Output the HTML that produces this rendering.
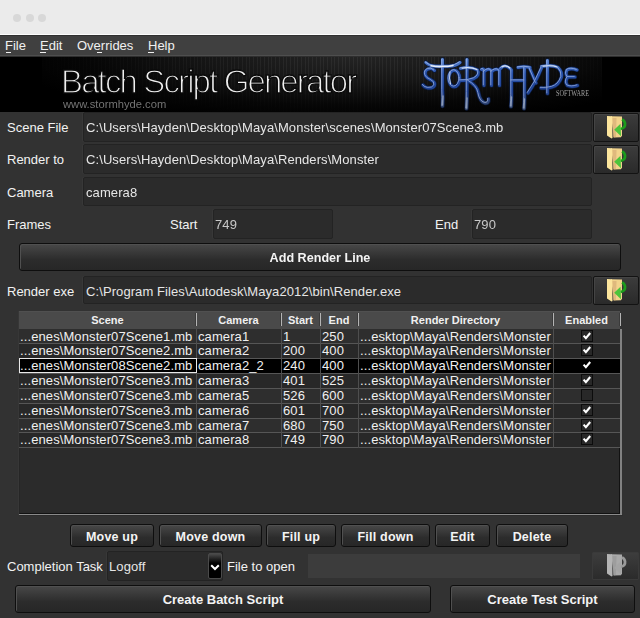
<!DOCTYPE html>
<html><head><meta charset="utf-8">
<style>
*{box-sizing:border-box;margin:0;padding:0}
html,body{width:640px;height:618px;overflow:hidden;background:#323232;font-family:"Liberation Sans",sans-serif;}
.a{position:absolute}
#title{left:0;top:0;width:640px;height:34px;background:#ebebeb}
.dot{width:8px;height:8px;border-radius:50%;background:#d8d8d8;top:14px}
#wl{left:0;top:34px;width:640px;height:1px;background:#fdfdfd}
#menu{left:0;top:35px;width:640px;height:21px;background:#404040;border-top:1px solid #303030;border-bottom:1px solid #4e4e4e}
.mi{top:38px;font-size:13px;color:#f0f0f0;line-height:15px;white-space:pre}
.ul{height:1px;background:#f0f0f0;top:52px}
#hdr{left:0;top:56px;width:640px;height:56px;background:#000;overflow:hidden}
.lbl{font-size:13px;color:#f2f2f2;line-height:15px;white-space:pre}
.inp{background:#2b2b2b;border:1px solid #232323;border-radius:2px;box-shadow:-1px 0 0 #383838}
.itx{font-size:13px;letter-spacing:0.09px;color:#e6e6e6;line-height:15px;white-space:pre}
.btn{background:linear-gradient(#484848,#2c2c2c 60%,#272727);border:1px solid #0e0e0e;border-radius:3px;box-shadow:inset 1px 1px 0 #505050;}
.bt{font-size:12.5px;letter-spacing:0.2px;font-weight:bold;color:#f4f4f4;white-space:pre;line-height:14px;text-align:center}
.fb{background:linear-gradient(#3c3c3c,#2a2a2a);border:1px solid #131313;border-radius:2px;box-shadow:inset 1px 1px 0 #444}
.th{font-size:11px;font-weight:bold;color:#f0f0f0;line-height:14px;text-align:center;top:313px;white-space:pre}
.td{font-size:13px;letter-spacing:0.1px;color:#f0f0f0;line-height:15px;white-space:pre}
.vs{width:1px;background:#4e4e4e}
.hs{height:1px;background:#565656;left:19px;width:601px}
.cb{width:12px;height:12px;background:#282828;border:1px solid #0c0c0c}
</style></head><body>
<div class="a" id="title"></div>
<div class="a dot" style="left:13px"></div>
<div class="a dot" style="left:26px"></div>
<div class="a dot" style="left:38px"></div>
<div class="a" id="wl"></div>
<div class="a" id="menu"></div>
<div class="a mi" style="left:5px">File</div><div class="a ul" style="left:6px;width:5px"></div>
<div class="a mi" style="left:40px">Edit</div><div class="a ul" style="left:40px;width:6px"></div>
<div class="a mi" style="left:77px">Overrides</div><div class="a ul" style="left:97px;width:5px"></div>
<div class="a mi" style="left:148px">Help</div><div class="a ul" style="left:148px;width:6px"></div>

<div class="a" id="hdr">
  <div class="a" style="left:42px;top:0;width:560px;height:56px;background:radial-gradient(ellipse 350px 66px at 310px 0,#242424 0%,#161616 40%,#060606 75%,#000 100%)"></div>
  <div class="a" style="left:42px;top:1px;width:560px;height:55px;background:repeating-linear-gradient(90deg,rgba(255,255,255,0.05) 0 1px,transparent 1px 3.7px);-webkit-mask-image:radial-gradient(ellipse 340px 62px at 300px 0,#000 25%,rgba(0,0,0,0.45) 60%,transparent 100%)"></div>
  <div class="a" style="left:0;top:0;width:640px;height:1px;background:#2e2e2e"></div>
  <div class="a" style="left:61px;top:7px;font-size:33px;line-height:37px;color:#f0f0f0;white-space:pre;letter-spacing:-1.88px;font-weight:normal;-webkit-text-stroke:1.35px #0a0a0a;will-change:transform">Batch Script Generator</div>
  <svg class="a" style="left:0;top:0" width="640" height="56" viewBox="0 56 640 56">
<defs><g id="L">
<path d="M434.5,70.5 Q432,67.5 428,69 Q424,71 425.5,75.5 Q427,78.5 431,80 Q435.5,82 434.5,85.5 Q433,88.5 428,88 Q424.5,87.5 423,85"/>
<path d="M425.8,62.5 Q429.5,66.2 436,66.3 L449,66.3 Q455.5,66 460,62.5"/>
<path d="M442.5,59.5 L442.5,90 Q443,98 442.5,106"/>
<ellipse cx="454.2" cy="78.5" rx="5.5" ry="8.2"/>
<path d="M467,59.5 L467,92 Q467,100 466.5,108.5"/>
<path d="M460.5,68.5 Q470,66 477.5,70 Q480.5,75 474,78.5 Q468,81 460,80.5"/>
<path d="M468,80.5 Q477.5,86 478.5,93 Q480,101.5 485,103 Q489,103.5 488.5,99"/>
<path d="M481.5,69.5 Q484,68 484,71 L484,85.5 M484,72 Q488,67.5 491.5,70.5 L491.5,85.5 M491.5,72 Q495.5,67.5 499.5,70.5 L499.5,85.5"/>
<path d="M500.5,68.5 Q505,63 511.5,70 L511.5,95 Q511.5,101 511,106.5"/>
<path d="M511.5,80.5 L524.5,80.5"/>
<path d="M518,67.5 Q524.5,66 530,67.5 M524.5,67.5 L524.5,97 Q524.5,103 524,108.5"/>
<path d="M530,69 L536,83 M541.5,68 Q536,82 528,93"/>
<path d="M547.5,60.5 L547.5,93.5"/>
<path d="M541.5,66.5 Q553,64.5 558,67.5 Q562.5,72 561.5,77 Q559,85 552,87 Q546,88.5 541,88"/>
<path d="M577,70 Q571,67.5 567,70 Q565,74 567.5,77 L575,77 M567.5,77.5 Q564.5,82 567.5,85.5 Q571.5,87.5 577.5,85.5"/>
</g></defs>
<linearGradient id="bg1" gradientUnits="userSpaceOnUse" x1="0" y1="58" x2="0" y2="110"><stop offset="0" stop-color="#5a86d4"/><stop offset="0.3" stop-color="#2650aa"/><stop offset="0.65" stop-color="#1e4090"/><stop offset="1" stop-color="#3a4a6a"/></linearGradient>
<g fill="none" stroke-linecap="round" stroke-linejoin="round">
<use href="#L" stroke="#0b1a3c" stroke-width="4.4"/>
<use href="#L" stroke="url(#bg1)" stroke-width="3"/>
<use href="#L" stroke="#dfeaff" stroke-width="0.8" transform="translate(-0.7,-0.6)" opacity="0.6"/>
<path d="M431,65.8 Q437,67 442,66.6 Q448,66.6 453,65.4" stroke="#e8eef8" stroke-width="1.5"/>
<path d="M450,72 Q448.8,78 450.5,84" stroke="#c8d8f0" stroke-width="1"/>
<path d="M462,68.2 Q470,66.5 477,69.5" stroke="#d8e4f6" stroke-width="1.1"/>
<path d="M502,67 Q506,64.3 510,68" stroke="#d8e4f6" stroke-width="1.1"/>
<path d="M543,66.2 Q552,65 557,67" stroke="#d8e4f6" stroke-width="1.1"/>
<path d="M443,96 L442.5,105 M467,98 L466.6,108 M511.5,97 L511,106 M524.5,99 L524,108" stroke="#8a9ab8" stroke-width="1.4"/>
</g>
<text x="556" y="96.3" font-family="Liberation Serif" font-size="7.5" fill="#a0a0a0" textLength="33" lengthAdjust="spacingAndGlyphs">SOFTWARE</text>
</svg>
  <div class="a" style="left:63px;top:42px;font-size:11.2px;line-height:12px;color:#747474;white-space:pre">www.stormhyde.com</div>
</div>

<!-- labels -->
<div class="a lbl" style="left:7px;top:120px">Scene File</div>
<div class="a lbl" style="left:7px;top:152px">Render to</div>
<div class="a lbl" style="left:7px;top:185px">Camera</div>
<div class="a lbl" style="left:7px;top:217px">Frames</div>
<div class="a lbl" style="left:170px;top:217px">Start</div>
<div class="a lbl" style="left:435px;top:217px">End</div>
<div class="a lbl" style="left:7px;top:284px">Render exe</div>

<!-- inputs -->
<div class="a inp" style="left:83px;top:112px;width:509px;height:30px"></div>
<div class="a itx" style="left:86px;top:120px">C:\Users\Hayden\Desktop\Maya\Monster\scenes\Monster07Scene3.mb</div>
<div class="a inp" style="left:83px;top:144px;width:509px;height:30px"></div>
<div class="a itx" style="left:86px;top:152px">C:\Users\Hayden\Desktop\Maya\Renders\Monster</div>
<div class="a inp" style="left:83px;top:177px;width:509px;height:29px"></div>
<div class="a itx" style="left:86px;top:185px">camera8</div>
<div class="a inp" style="left:213px;top:209px;width:120px;height:30px"></div>
<div class="a itx" style="left:215px;top:217px;color:#c8c8c8">749</div>
<div class="a inp" style="left:472px;top:209px;width:120px;height:30px"></div>
<div class="a itx" style="left:474px;top:217px;color:#c8c8c8">790</div>
<div class="a inp" style="left:83px;top:276px;width:509px;height:28px"></div>
<div class="a itx" style="left:86px;top:284px">C:\Program Files\Autodesk\Maya2012\bin\Render.exe</div>

<!-- folder buttons -->
<div class="a fb" style="left:593px;top:113px;width:46px;height:29px;overflow:hidden"><div class="a" style="left:-1px;top:-1px"><svg class="a" style="left:0;top:0" width="46" height="29" viewBox="593 113 46 29"><polygon points="611,116.2 622,116.5 622,135.5 621,137.3 614,137.6" fill="#f2d38c"/><polygon points="612.5,118 616.5,118 616,137 613,137.5" fill="#d8b078" opacity="0.75"/><polygon points="607,116 612,116.3 612.5,138 611.5,138.6 607,135.5" fill="#fce59d"/><path d="M620.5,129 Q625.5,128 625,123.5 Q624.6,120.6 622,119.5" stroke="#1c9a1c" stroke-width="2.8" fill="none"/><polygon points="614.2,129.8 620.5,123.8 621,136.2" fill="#4cc43a"/></svg></div></div>
<div class="a fb" style="left:593px;top:145px;width:46px;height:29px;overflow:hidden"><div class="a" style="left:-1px;top:-1px"><svg class="a" style="left:0;top:0" width="46" height="29" viewBox="593 113 46 29"><polygon points="611,116.2 622,116.5 622,135.5 621,137.3 614,137.6" fill="#f2d38c"/><polygon points="612.5,118 616.5,118 616,137 613,137.5" fill="#d8b078" opacity="0.75"/><polygon points="607,116 612,116.3 612.5,138 611.5,138.6 607,135.5" fill="#fce59d"/><path d="M620.5,129 Q625.5,128 625,123.5 Q624.6,120.6 622,119.5" stroke="#1c9a1c" stroke-width="2.8" fill="none"/><polygon points="614.2,129.8 620.5,123.8 621,136.2" fill="#4cc43a"/></svg></div></div>
<div class="a fb" style="left:593px;top:276px;width:46px;height:29px;overflow:hidden"><div class="a" style="left:-1px;top:-1px"><svg class="a" style="left:0;top:0" width="46" height="29" viewBox="593 113 46 29"><polygon points="611,116.2 622,116.5 622,135.5 621,137.3 614,137.6" fill="#f2d38c"/><polygon points="612.5,118 616.5,118 616,137 613,137.5" fill="#d8b078" opacity="0.75"/><polygon points="607,116 612,116.3 612.5,138 611.5,138.6 607,135.5" fill="#fce59d"/><path d="M620.5,129 Q625.5,128 625,123.5 Q624.6,120.6 622,119.5" stroke="#1c9a1c" stroke-width="2.8" fill="none"/><polygon points="614.2,129.8 620.5,123.8 621,136.2" fill="#4cc43a"/></svg></div></div>

<!-- add render line -->
<div class="a btn" style="left:19px;top:243px;width:602px;height:28px"></div>
<div class="a bt" style="left:19px;top:251px;width:602px;font-size:12.6px;letter-spacing:0">Add Render Line</div>

<!-- table -->
<div class="a" style="left:18px;top:311px;width:1px;height:204px;background:#373737"></div>
<div class="a" style="left:19px;top:311px;width:601px;height:203px;background:#2b2b2b;border-left:1px solid #262626;border-right:1px solid #121212;border-bottom:1px solid #121212"></div>
<div class="a" style="left:620px;top:329px;width:2px;height:186px;background:#828282"></div>
<div class="a" style="left:19px;top:514px;width:603px;height:1px;background:#8a8a8a"></div>
<div class="a" style="left:19px;top:515px;width:604px;height:1px;background:#2c2c2c"></div>
<div class="a" style="left:19px;top:311px;width:601px;height:18px;background:#4a4a4a;border-top:1px solid #505050"></div>
<div class="a" style="left:19px;top:329px;width:601px;height:14px;background:#2e2e2e"></div>
<div class="a" style="left:19px;top:343px;width:601px;height:15px;background:#282828"></div>
<div class="a" style="left:19px;top:358px;width:601px;height:15px;background:#000"></div>
<div class="a" style="left:19px;top:373px;width:601px;height:15px;background:#282828"></div>
<div class="a" style="left:19px;top:388px;width:601px;height:15px;background:#2e2e2e"></div>
<div class="a" style="left:19px;top:403px;width:601px;height:15px;background:#282828"></div>
<div class="a" style="left:19px;top:418px;width:601px;height:14px;background:#2e2e2e"></div>
<div class="a" style="left:19px;top:432px;width:601px;height:15px;background:#282828"></div>
<div class="a hs" style="top:343px"></div>
<div class="a hs" style="top:358px"></div>
<div class="a hs" style="top:373px"></div>
<div class="a hs" style="top:388px"></div>
<div class="a hs" style="top:403px"></div>
<div class="a hs" style="top:418px"></div>
<div class="a hs" style="top:432px"></div>
<div class="a hs" style="top:447px"></div>
<div class="a vs" style="left:196px;top:329px;height:119px"></div>
<div class="a vs" style="left:281px;top:329px;height:119px"></div>
<div class="a vs" style="left:320px;top:329px;height:119px"></div>
<div class="a vs" style="left:358px;top:329px;height:119px"></div>
<div class="a vs" style="left:553px;top:329px;height:119px"></div>
<div class="a th" style="left:19px;width:177px">Scene</div>
<div class="a th" style="left:196px;width:85px">Camera</div>
<div class="a th" style="left:281px;width:39px">Start</div>
<div class="a th" style="left:320px;width:38px">End</div>
<div class="a th" style="left:358px;width:195px">Render Directory</div>
<div class="a th" style="left:553px;width:67px">Enabled</div>
<div class="a" style="left:195px;top:313px;width:1px;height:13px;background:#3a3a3a"></div>
<div class="a" style="left:196px;top:313px;width:1px;height:13px;background:#b4b4b4"></div>
<div class="a" style="left:280px;top:313px;width:1px;height:13px;background:#3a3a3a"></div>
<div class="a" style="left:281px;top:313px;width:1px;height:13px;background:#b4b4b4"></div>
<div class="a" style="left:319px;top:313px;width:1px;height:13px;background:#3a3a3a"></div>
<div class="a" style="left:320px;top:313px;width:1px;height:13px;background:#b4b4b4"></div>
<div class="a" style="left:357px;top:313px;width:1px;height:13px;background:#3a3a3a"></div>
<div class="a" style="left:358px;top:313px;width:1px;height:13px;background:#b4b4b4"></div>
<div class="a" style="left:552px;top:313px;width:1px;height:13px;background:#3a3a3a"></div>
<div class="a" style="left:553px;top:313px;width:1px;height:13px;background:#b4b4b4"></div>
<div class="a" style="left:619px;top:313px;width:1px;height:13px;background:#3a3a3a"></div>
<div class="a" style="left:620px;top:313px;width:1px;height:13px;background:#b4b4b4"></div>
<div class="a td" style="left:20px;top:329px">...enes\Monster07Scene1.mb</div>
<div class="a td" style="left:198px;top:329px">camera1</div>
<div class="a td" style="left:283px;top:329px">1</div>
<div class="a td" style="left:322px;top:329px">250</div>
<div class="a td" style="left:360px;top:329px">...esktop\Maya\Renders\Monster</div>
<div class="a cb" style="left:581px;top:330px;background:#282828;border-color:#0c0c0c"><svg width="12" height="12" style="position:absolute;left:-1px;top:-1px"><path d="M2.6 5.6 L4.9 8.2 L9.2 3" stroke="#fff" stroke-width="2.1" fill="none"/></svg></div>
<div class="a td" style="left:20px;top:343px">...enes\Monster07Scene2.mb</div>
<div class="a td" style="left:198px;top:343px">camera2</div>
<div class="a td" style="left:283px;top:343px">200</div>
<div class="a td" style="left:322px;top:343px">400</div>
<div class="a td" style="left:360px;top:343px">...esktop\Maya\Renders\Monster</div>
<div class="a cb" style="left:581px;top:344px;background:#282828;border-color:#0c0c0c"><svg width="12" height="12" style="position:absolute;left:-1px;top:-1px"><path d="M2.6 5.6 L4.9 8.2 L9.2 3" stroke="#fff" stroke-width="2.1" fill="none"/></svg></div>
<div class="a td" style="left:20px;top:358px">...enes\Monster08Scene2.mb</div>
<div class="a td" style="left:198px;top:358px">camera2_2</div>
<div class="a td" style="left:283px;top:358px">240</div>
<div class="a td" style="left:322px;top:358px">400</div>
<div class="a td" style="left:360px;top:358px">...esktop\Maya\Renders\Monster</div>
<div class="a cb" style="left:581px;top:359px;background:#000;border-color:#000"><svg width="12" height="12" style="position:absolute;left:-1px;top:-1px"><path d="M2.6 5.6 L4.9 8.2 L9.2 3" stroke="#fff" stroke-width="2.1" fill="none"/></svg></div>
<div class="a td" style="left:20px;top:373px">...enes\Monster07Scene3.mb</div>
<div class="a td" style="left:198px;top:373px">camera3</div>
<div class="a td" style="left:283px;top:373px">401</div>
<div class="a td" style="left:322px;top:373px">525</div>
<div class="a td" style="left:360px;top:373px">...esktop\Maya\Renders\Monster</div>
<div class="a cb" style="left:581px;top:374px;background:#282828;border-color:#0c0c0c"><svg width="12" height="12" style="position:absolute;left:-1px;top:-1px"><path d="M2.6 5.6 L4.9 8.2 L9.2 3" stroke="#fff" stroke-width="2.1" fill="none"/></svg></div>
<div class="a td" style="left:20px;top:388px">...enes\Monster07Scene3.mb</div>
<div class="a td" style="left:198px;top:388px">camera5</div>
<div class="a td" style="left:283px;top:388px">526</div>
<div class="a td" style="left:322px;top:388px">600</div>
<div class="a td" style="left:360px;top:388px">...esktop\Maya\Renders\Monster</div>
<div class="a cb" style="left:581px;top:389px;background:#282828;border-color:#0c0c0c"></div>
<div class="a td" style="left:20px;top:403px">...enes\Monster07Scene3.mb</div>
<div class="a td" style="left:198px;top:403px">camera6</div>
<div class="a td" style="left:283px;top:403px">601</div>
<div class="a td" style="left:322px;top:403px">700</div>
<div class="a td" style="left:360px;top:403px">...esktop\Maya\Renders\Monster</div>
<div class="a cb" style="left:581px;top:404px;background:#282828;border-color:#0c0c0c"><svg width="12" height="12" style="position:absolute;left:-1px;top:-1px"><path d="M2.6 5.6 L4.9 8.2 L9.2 3" stroke="#fff" stroke-width="2.1" fill="none"/></svg></div>
<div class="a td" style="left:20px;top:418px">...enes\Monster07Scene3.mb</div>
<div class="a td" style="left:198px;top:418px">camera7</div>
<div class="a td" style="left:283px;top:418px">680</div>
<div class="a td" style="left:322px;top:418px">750</div>
<div class="a td" style="left:360px;top:418px">...esktop\Maya\Renders\Monster</div>
<div class="a cb" style="left:581px;top:419px;background:#282828;border-color:#0c0c0c"><svg width="12" height="12" style="position:absolute;left:-1px;top:-1px"><path d="M2.6 5.6 L4.9 8.2 L9.2 3" stroke="#fff" stroke-width="2.1" fill="none"/></svg></div>
<div class="a td" style="left:20px;top:432px">...enes\Monster07Scene3.mb</div>
<div class="a td" style="left:198px;top:432px">camera8</div>
<div class="a td" style="left:283px;top:432px">749</div>
<div class="a td" style="left:322px;top:432px">790</div>
<div class="a td" style="left:360px;top:432px">...esktop\Maya\Renders\Monster</div>
<div class="a cb" style="left:581px;top:433px;background:#282828;border-color:#0c0c0c"><svg width="12" height="12" style="position:absolute;left:-1px;top:-1px"><path d="M2.6 5.6 L4.9 8.2 L9.2 3" stroke="#fff" stroke-width="2.1" fill="none"/></svg></div>
<div class="a" style="left:19px;top:358px;width:178px;height:15px;border:1px solid #e8e8e8"></div>

<!-- bottom buttons -->
<div class="a btn" style="left:70px;top:524px;width:84px;height:23px"></div>
<div class="a bt" style="left:70px;top:530px;width:84px">Move up</div>
<div class="a btn" style="left:159px;top:524px;width:103px;height:23px"></div>
<div class="a bt" style="left:159px;top:530px;width:103px">Move down</div>
<div class="a btn" style="left:266px;top:524px;width:70px;height:23px"></div>
<div class="a bt" style="left:266px;top:530px;width:70px">Fill up</div>
<div class="a btn" style="left:341px;top:524px;width:89px;height:23px"></div>
<div class="a bt" style="left:341px;top:530px;width:89px">Fill down</div>
<div class="a btn" style="left:435px;top:524px;width:55px;height:23px"></div>
<div class="a bt" style="left:435px;top:530px;width:55px">Edit</div>
<div class="a btn" style="left:496px;top:524px;width:72px;height:23px"></div>
<div class="a bt" style="left:496px;top:530px;width:72px">Delete</div>

<!-- completion row -->
<div class="a lbl" style="left:7px;top:559px">Completion Task</div>
<div class="a inp" style="left:107px;top:551px;width:116px;height:30px"></div>
<div class="a itx" style="left:109px;top:559px">Logoff</div>
<div class="a" style="left:208px;top:553px;width:14px;height:26px;background:linear-gradient(#4a4a4a,#000 38%);border:1px solid #4a4a4a;border-radius:2px"></div><svg class="a" style="left:208px;top:553px" width="14" height="26"><path d="M3.2 12.2 L7 16 L10.8 12.2" stroke="#fff" stroke-width="2" fill="none"/></svg>
<div class="a lbl" style="left:227px;top:559px">File to open</div>
<div class="a" style="left:308px;top:554px;width:272px;height:24px;background:#3c3c3c"></div>
<div class="a fb" style="left:592px;top:552px;width:47px;height:28px;border-color:#3a3a3a;border-radius:1px;background:linear-gradient(#3d3d3d,#2b2b2b);box-shadow:none;overflow:hidden"><div class="a" style="left:0px;top:-2px"><svg class="a" style="left:0;top:0" width="46" height="29" viewBox="593 113 46 29"><polygon points="611,116.2 622,116.5 622,135.5 621,137.3 614,137.6" fill="#a9a9a9"/><polygon points="612.5,118 616.5,118 616,137 613,137.5" fill="#999" opacity="0.75"/><polygon points="607,116 612,116.3 612.5,138 611.5,138.6 607,135.5" fill="#b4b4b4"/><path d="M620.5,129 Q625.5,128 625,123.5 Q624.6,120.6 622,119.5" stroke="#9a9a9a" stroke-width="2.8" fill="none"/><polygon points="614.2,129.8 620.5,123.8 621,136.2" fill="#a4a4a4"/></svg></div></div>

<div class="a btn" style="left:15px;top:585px;width:416px;height:28px"></div>
<div class="a bt" style="left:15px;top:593px;width:416px;font-size:13px;letter-spacing:0">Create Batch Script</div>
<div class="a btn" style="left:450px;top:585px;width:185px;height:28px"></div>
<div class="a bt" style="left:450px;top:593px;width:185px;font-size:13px;letter-spacing:0">Create Test Script</div>
</body></html>
